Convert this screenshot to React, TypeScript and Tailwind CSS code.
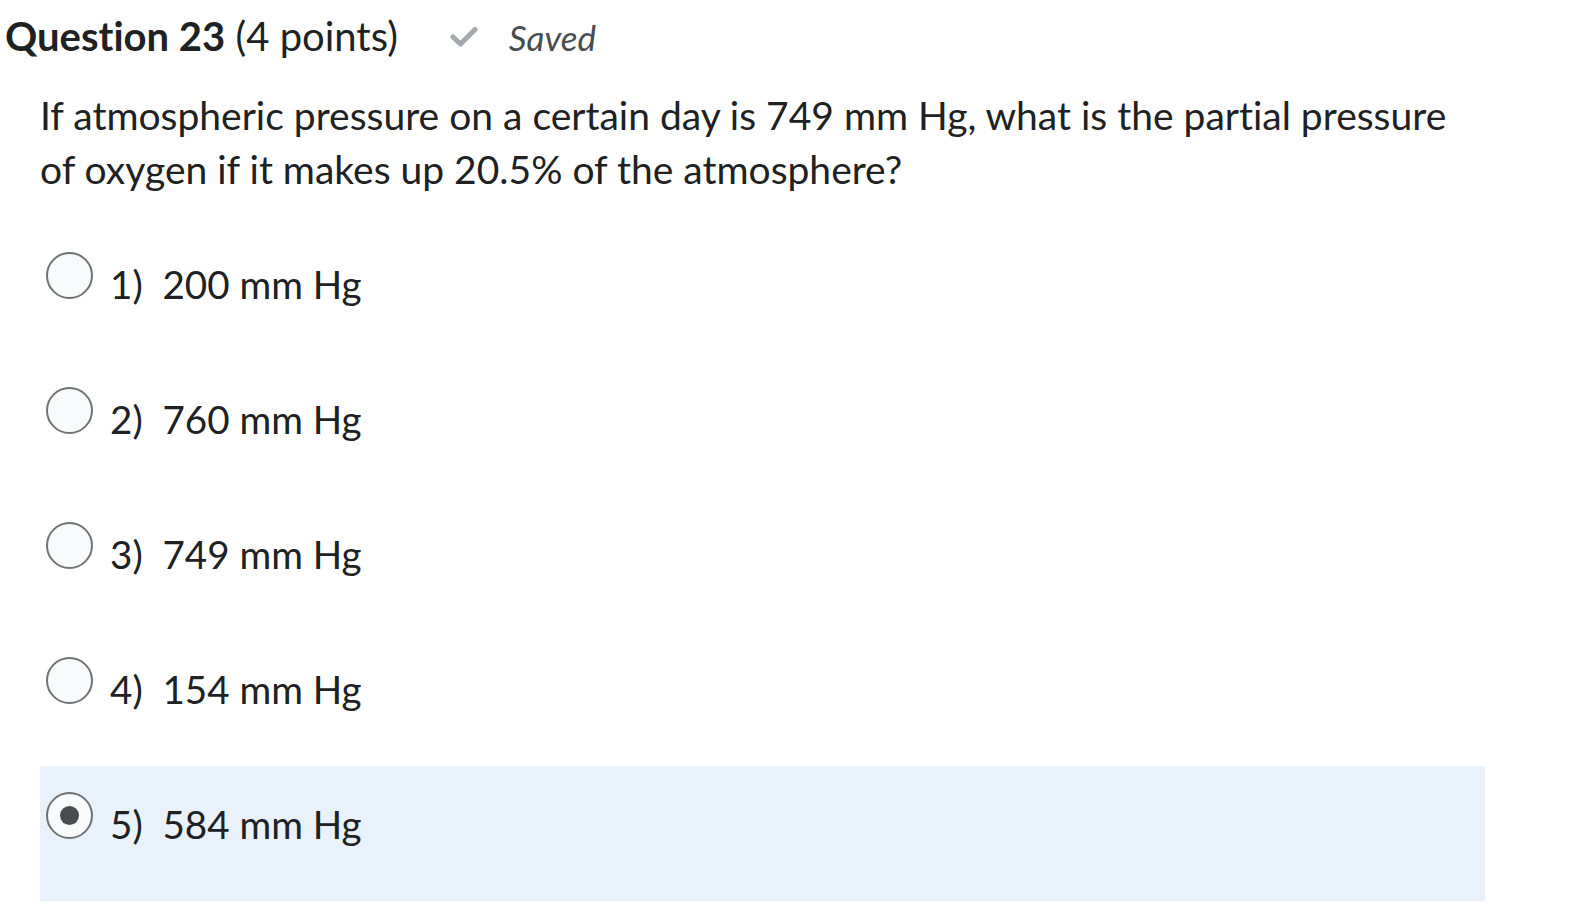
const options = [
  { n: 1, label: '200 mm Hg' },
  { n: 2, label: '760 mm Hg' },
  { n: 3, label: '749 mm Hg' },
  { n: 4, label: '154 mm Hg' },
  { n: 5, label: '584 mm Hg' },
]

const selected = 5

function Radio({ checked }: { checked: boolean }) {
  return (
    <span className="flex h-[47px] w-[47px] shrink-0 items-center justify-center rounded-full border-2 border-[#6e7376] bg-[#f9fafc]">
      {checked && <span className="h-[19px] w-[19px] rounded-full bg-[#494c4e]" />}
    </span>
  )
}

export default function App() {
  return (
    <div className="min-h-screen bg-white font-['Lato','Noto_Sans',sans-serif] text-[#202122] [font-variant-ligatures:none]">
      <div className="flex items-baseline pl-[5px] pt-[10px]">
        <h2 className="text-[40px] leading-[52px]">
          <span className="font-bold">Question 23</span> (4 points)
        </h2>
        <span className="ml-[52px] flex items-baseline gap-[31px] text-[35px] italic text-[#494c4e]">
          <svg width="28" height="22" viewBox="0 0 28 22" className="self-center">
            <path d="M3 11 L10.5 18 L25 3.5" fill="none" stroke="#a3a9ac" strokeWidth="5" strokeLinecap="round" strokeLinejoin="round" />
          </svg>
          Saved
        </span>
      </div>

      <p className="mt-[24px] pl-[40px] pr-[120px] text-[39px] leading-[54px]">
        If atmospheric pressure on a certain day is 749 mm Hg, what is the partial pressure of oxygen if it makes up 20.5% of the atmosphere?
      </p>

      <div className="ml-[40px] mt-[30px] w-[1445px]">
        {options.map((o) => (
          <label
            key={o.n}
            className={`flex h-[135px] items-start gap-[17px] pl-[6px] pt-[26px] ${o.n === selected ? 'bg-[#e9f1fb]' : ''}`}
          >
            <Radio checked={o.n === selected} />
            <span className="mt-[4px] text-[38.6px] leading-[56px]">
              {o.n})&nbsp; {o.label}
            </span>
          </label>
        ))}
      </div>
    </div>
  )
}
